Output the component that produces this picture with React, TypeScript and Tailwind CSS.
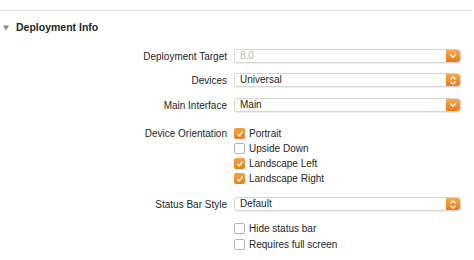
import React from 'react';

type Kind = 'down' | 'updown';

const Arrow = ({ kind }: { kind: Kind }) => (
  <div className="flex h-full w-[14px] items-center justify-center rounded-r-[3px] bg-gradient-to-b from-[#f8a94a] to-[#ea7a12]">
    {kind === 'down' ? (
      <svg width="8" height="6" viewBox="0 0 8 6">
        <path d="M1.5 1.8 L4 4.2 L6.5 1.8" fill="none" stroke="white" strokeWidth="1.3" strokeLinecap="round" strokeLinejoin="round" />
      </svg>
    ) : (
      <svg width="8" height="11" viewBox="0 0 8 11">
        <path d="M1.8 4 L4 1.8 L6.2 4" fill="none" stroke="white" strokeWidth="1.2" strokeLinecap="round" strokeLinejoin="round" />
        <path d="M1.8 7 L4 9.2 L6.2 7" fill="none" stroke="white" strokeWidth="1.2" strokeLinecap="round" strokeLinejoin="round" />
      </svg>
    )}
  </div>
);

const Select = ({ value, kind, disabled }: { value: string; kind: Kind; disabled?: boolean }) => (
  <div className="flex h-[14px] w-[227px] items-center rounded-[3px] border border-[#d6d6d6] bg-white shadow-[0_1px_0_rgba(0,0,0,0.06)]">
    <span className={`flex-1 pl-[5px] leading-none ${disabled ? 'text-[#b8b8b8]' : 'text-[#262626]'}`}>{value}</span>
    <Arrow kind={kind} />
  </div>
);

const Check = ({ label, checked }: { label: string; checked?: boolean }) => (
  <div className="flex h-full items-center gap-[4px]">
    {checked ? (
      <div className="flex h-[11px] w-[11px] items-center justify-center rounded-[2px] bg-gradient-to-b from-[#f5a040] to-[#e9801c]">
        <svg width="8" height="8" viewBox="0 0 8 8">
          <path d="M1.6 4.3 L3.2 6 L6.4 1.8" fill="none" stroke="white" strokeWidth="1.3" strokeLinecap="round" strokeLinejoin="round" />
        </svg>
      </div>
    ) : (
      <div className="h-[11px] w-[11px] rounded-[2px] border border-[#b4b4b4] bg-white" />
    )}
    <span className="text-[#262626]">{label}</span>
  </div>
);

const Label = ({ children }: { children: React.ReactNode }) => (
  <div className="w-[234px] shrink-0 pr-[7px] text-right text-[#262626]">{children}</div>
);

const App = () => {
  return (
    <div className="h-[260px] w-[474px] overflow-hidden bg-white font-['Liberation_Sans',Arial,sans-serif] text-[10px]">
      <div className="h-[10px]" />
      <div className="mr-[2px] border-t border-[#e3e3e3]" />
      <div className="flex h-[33px] items-center">
        <svg width="16" height="8" viewBox="0 0 16 8" className="shrink-0">
          <path d="M3 1.5 L9 1.5 L6 6.5 Z" fill="#8a8a8a" />
        </svg>
        <span className="text-[10.5px] font-bold text-[#262626]">Deployment Info</span>
      </div>

      <div className="mt-[5px] flex h-[14px] items-center">
        <Label>Deployment Target</Label>
        <Select value="8.0" kind="down" disabled />
      </div>
      <div className="mt-[10px] flex h-[14px] items-center">
        <Label>Devices</Label>
        <Select value="Universal" kind="updown" />
      </div>
      <div className="mt-[11px] flex h-[14px] items-center">
        <Label>Main Interface</Label>
        <Select value="Main" kind="down" />
      </div>

      <div className="mt-[14px] flex">
        <Label>
          <div className="flex h-[15px] items-center justify-end">Device Orientation</div>
        </Label>
        <div className="flex flex-col">
          <div className="h-[15px]"><Check label="Portrait" checked /></div>
          <div className="h-[15px]"><Check label="Upside Down" /></div>
          <div className="h-[15px]"><Check label="Landscape Left" checked /></div>
          <div className="h-[15px]"><Check label="Landscape Right" checked /></div>
        </div>
      </div>

      <div className="mt-[11px] flex h-[14px] items-center">
        <Label>Status Bar Style</Label>
        <Select value="Default" kind="updown" />
      </div>

      <div className="mt-[9px] flex">
        <div className="w-[234px] shrink-0" />
        <div className="flex flex-col">
          <div className="h-[16px]"><Check label="Hide status bar" /></div>
          <div className="h-[16px]"><Check label="Requires full screen" /></div>
        </div>
      </div>
    </div>
  );
};

export default App;
